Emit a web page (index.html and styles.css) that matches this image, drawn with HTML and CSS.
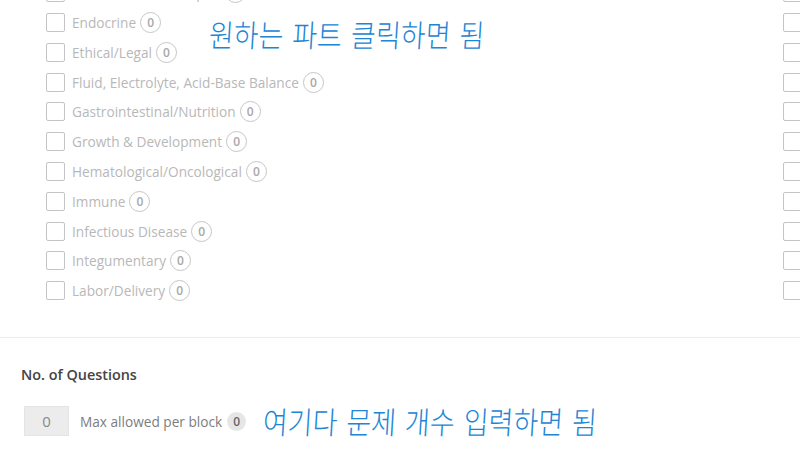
FILE: index.html
```html
<!DOCTYPE html>
<html lang="en">
<head>
<meta charset="utf-8">
<title>No. of Questions</title>
<link rel="stylesheet" href="styles.css">
</head>
<body>
<div class="page">
  <section class="topics">
    <ul class="list">
      <li class="row"><span class="box"></span><span class="label">Ear/Nose/Throat Sepsis</span><span class="count">0</span></li>
      <li class="row"><span class="box"></span><span class="label">Endocrine</span><span class="count">0</span></li>
      <li class="row"><span class="box"></span><span class="label">Ethical/Legal</span><span class="count">0</span></li>
      <li class="row"><span class="box"></span><span class="label">Fluid, Electrolyte, Acid-Base Balance</span><span class="count">0</span></li>
      <li class="row"><span class="box"></span><span class="label">Gastrointestinal/Nutrition</span><span class="count">0</span></li>
      <li class="row"><span class="box"></span><span class="label">Growth &amp; Development</span><span class="count">0</span></li>
      <li class="row"><span class="box"></span><span class="label">Hematological/Oncological</span><span class="count">0</span></li>
      <li class="row"><span class="box"></span><span class="label">Immune</span><span class="count">0</span></li>
      <li class="row"><span class="box"></span><span class="label">Infectious Disease</span><span class="count">0</span></li>
      <li class="row"><span class="box"></span><span class="label">Integumentary</span><span class="count">0</span></li>
      <li class="row"><span class="box"></span><span class="label">Labor/Delivery</span><span class="count">0</span></li>
    </ul>
    <ul class="list list-right">
      <li class="row"><span class="box"></span></li>
      <li class="row"><span class="box"></span></li>
      <li class="row"><span class="box"></span></li>
      <li class="row"><span class="box"></span></li>
      <li class="row"><span class="box"></span></li>
      <li class="row"><span class="box"></span></li>
      <li class="row"><span class="box"></span></li>
      <li class="row"><span class="box"></span></li>
      <li class="row"><span class="box"></span></li>
      <li class="row"><span class="box"></span></li>
      <li class="row"><span class="box"></span></li>
    </ul>
    <p class="note note-top">원하는 파트 클릭하면 됨</p>
  </section>
  <section class="questions">
    <h2 class="title">No. of Questions</h2>
    <div class="controls">
      <span class="input">0</span>
      <span class="hint">Max allowed per block</span>
      <span class="pill">0</span>
      <p class="note note-bottom">여기다 문제 개수 입력하면 됨</p>
    </div>
  </section>
</div>
</body>
</html>
```
FILE: styles.css
```css
html, body {
  margin: 0;
  padding: 0;
  background: #fff;
}
.page {
  width: 800px;
  height: 449px;
  overflow: hidden;
  font-family: "Open Sans", "Liberation Sans", sans-serif;
}
.topics {
  position: relative;
  display: flex;
  justify-content: space-between;
  height: 338px;
  padding-left: 46px;
  box-sizing: border-box;
  border-bottom: 1px solid #ececec;
}
.list {
  list-style: none;
  margin: -22px 0 0;
  padding: 0;
}
.list-right {
  width: 17px;
}
.row {
  display: flex;
  align-items: center;
  height: 29.78px;
}
.box {
  flex: none;
  width: 19px;
  height: 19px;
  box-sizing: border-box;
  border: 1px solid #c4c4c4;
  border-radius: 2px;
  background: #fff;
}
.label {
  margin-left: 7px;
  font-size: 13.65px;
  color: #b8b8b8;
}
.count {
  flex: none;
  display: flex;
  align-items: center;
  justify-content: center;
  width: 21px;
  height: 21px;
  margin-left: 4px;
  box-sizing: border-box;
  border: 1px solid #c6c6c6;
  border-radius: 50%;
  font-size: 12px;
  font-weight: 600;
  color: #a8a8a8;
}
.note {
  margin: 0;
  font-family: "Noto Sans CJK KR", sans-serif;
  font-weight: 300;
  color: #2185d5;
  white-space: nowrap;
}
.note-top {
  position: absolute;
  left: 209px;
  top: 12px;
  font-size: 27px;
  line-height: 44px;
  word-spacing: 3px;
  transform-origin: left center;
  transform: scaleY(1.15) skewX(-4deg);
}
.questions {
  padding: 27px 0 0 21px;
}
.title {
  margin: 0;
  font-size: 14.4px;
  font-weight: 600;
  line-height: 20px;
  color: #444;
}
.controls {
  display: flex;
  align-items: center;
  margin: 21px 0 0 3px;
}
.input {
  width: 45px;
  height: 30px;
  line-height: 29px;
  text-align: center;
  background: #ececec;
  border: 1px solid #e4e4e4;
  box-sizing: border-box;
  font-size: 15px;
  color: #888;
}
.hint {
  margin-left: 11px;
  font-size: 13.65px;
  color: #7d7d7d;
}
.pill {
  display: flex;
  align-items: center;
  justify-content: center;
  width: 19px;
  height: 19px;
  margin-left: 5px;
  border-radius: 50%;
  background: #e6e6e6;
  font-size: 12px;
  font-weight: 600;
  color: #666;
}
.note-bottom {
  margin-left: 17px;
  font-size: 27px;
  line-height: 30px;
  word-spacing: 3px;
  transform-origin: left center;
  transform: scaleY(1.15) skewX(-4deg);
}
```
